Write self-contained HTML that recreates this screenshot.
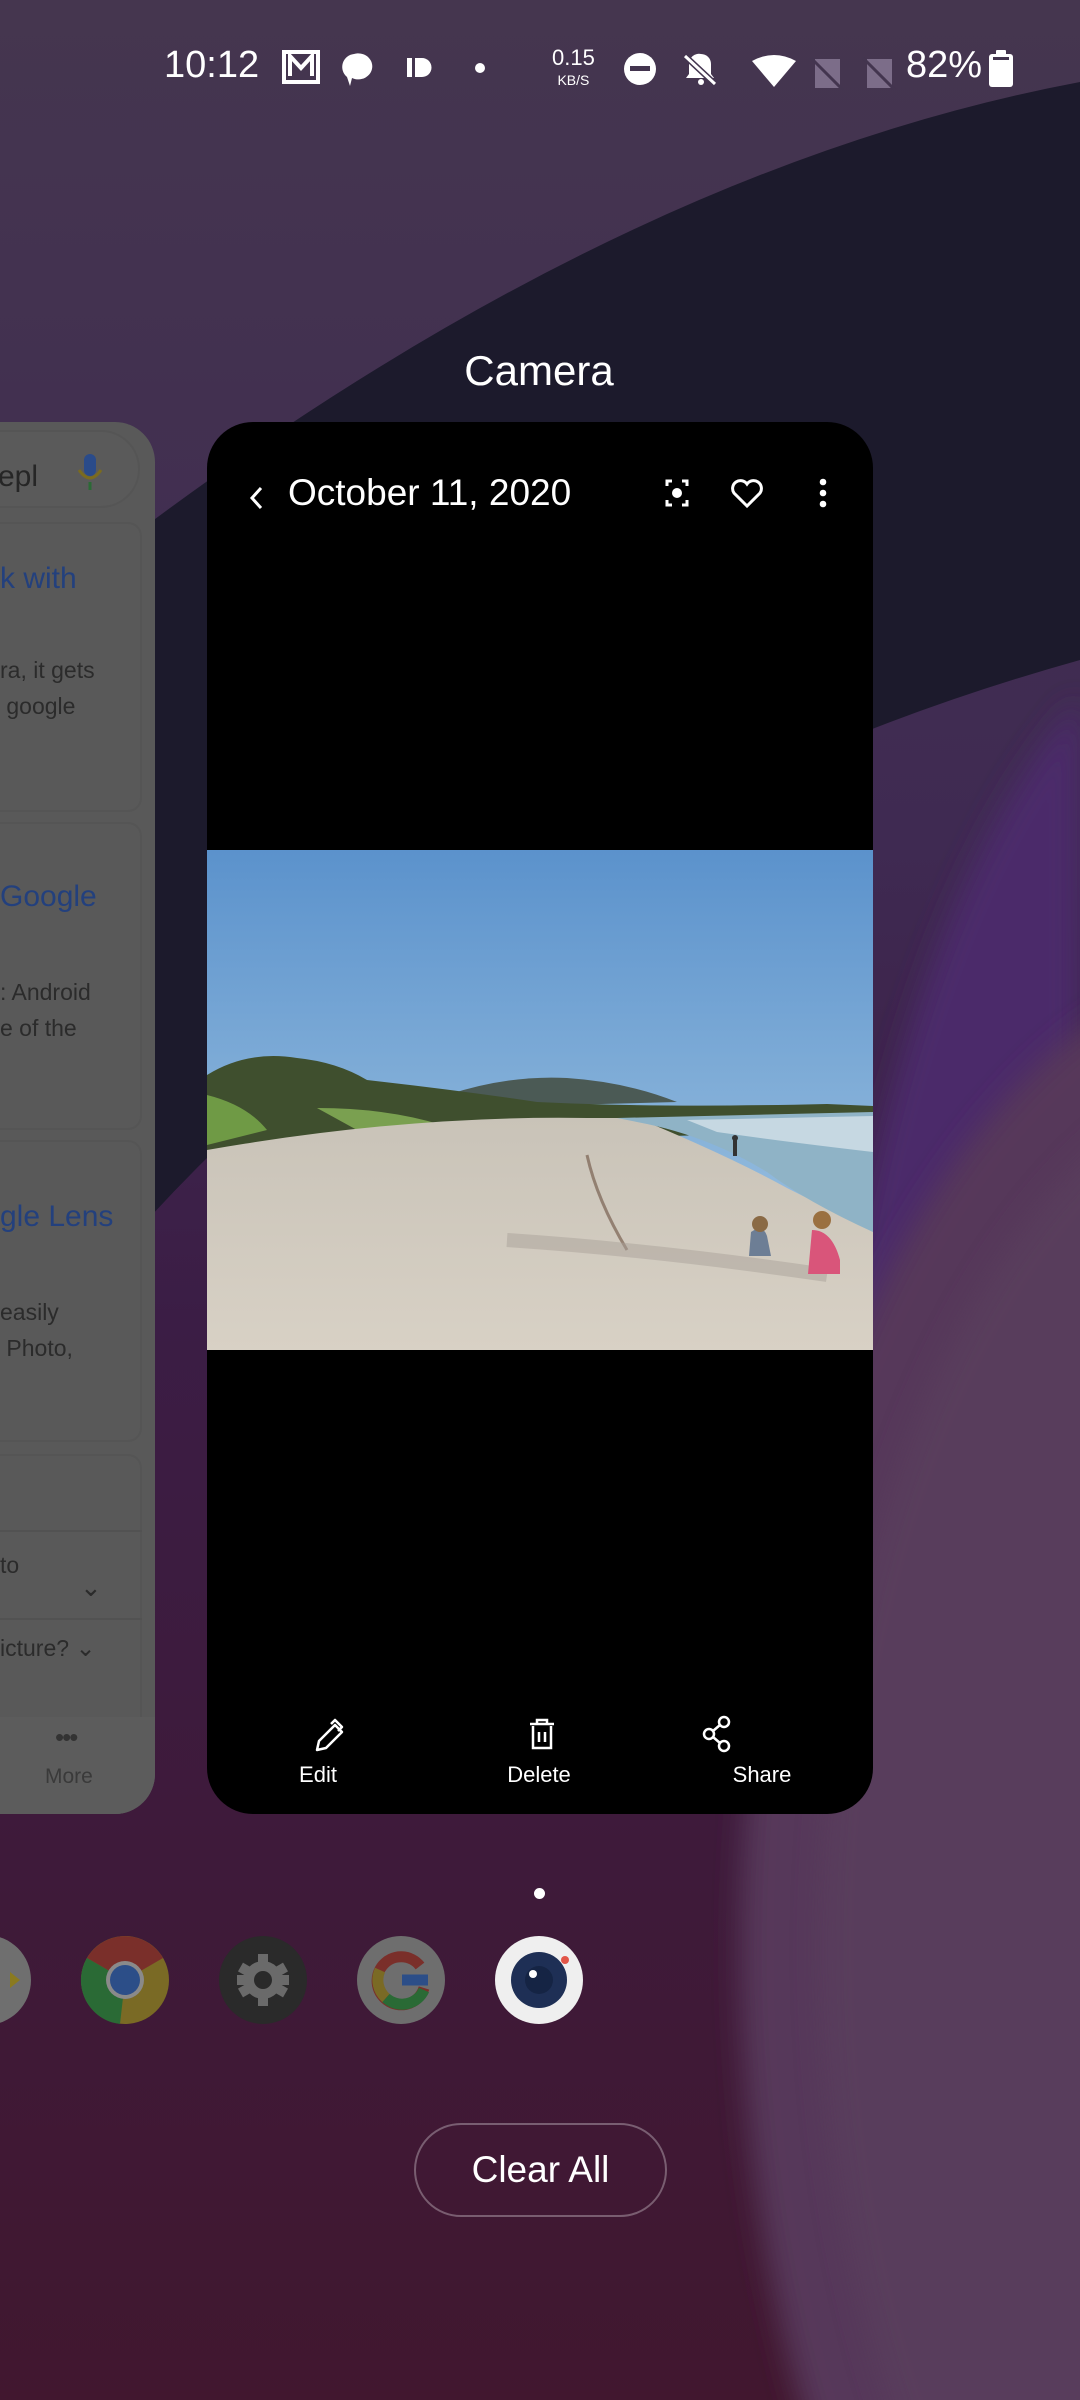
<!DOCTYPE html>
<html><head><meta charset="utf-8"><style>
*{margin:0;padding:0;box-sizing:border-box}
html,body{width:1080px;height:2400px;overflow:hidden;font-family:"Liberation Sans",sans-serif}
body{position:relative;background:#3f1d44}
.abs{position:absolute}
.st{color:#fff;font-size:38px;top:46px}
.lbl{color:#fff;font-size:22px;text-align:center;width:120px}
</style></head><body>
<svg class="abs" style="left:0;top:0" width="1080" height="2400">
<defs>
<linearGradient id="bg" x1="0" y1="0" x2="0" y2="1">
<stop offset="0" stop-color="#45364f"/><stop offset="0.35" stop-color="#3f2a52"/><stop offset="0.55" stop-color="#3b1d45"/><stop offset="1" stop-color="#41172f"/></linearGradient>
<linearGradient id="sand" x1="0" y1="0" x2="0" y2="1"><stop offset="0" stop-color="#c9c3b8"/><stop offset="1" stop-color="#d8d1c5"/></linearGradient>
<linearGradient id="sky" x1="0" y1="0" x2="0" y2="1"><stop offset="0" stop-color="#5b92cc"/><stop offset="1" stop-color="#a9cbe4"/></linearGradient>
<filter id="bl"><feGaussianBlur stdDeviation="14"/></filter>
</defs>
<rect width="1080" height="2400" fill="url(#bg)"/>
<path d="M1080 700 Q900 900 830 1400 L1080 1400Z" fill="#4b2a6a" filter="url(#bl)"/>
<ellipse cx="1300" cy="1950" rx="560" ry="1000" fill="#56395a" filter="url(#bl)"/>
<ellipse cx="1320" cy="1950" rx="500" ry="900" fill="#5a3f5d" opacity="0.7" filter="url(#bl)"/>
<path d="M1080 82 Q560 180 0 640 L0 1400 Q400 850 1080 660Z" fill="#1c1a2c"/>
</svg>

<!-- status bar -->
<div class="abs st" style="left:164px;top:44px;font-size:38px">10:12</div>
<svg class="abs" style="left:280px;top:48px" width="220" height="40">
<rect x="4" y="4" width="34" height="30" fill="none" stroke="#fff" stroke-width="4"/><path d="M10 28V8l11 12 11-12v20" stroke="#fff" stroke-width="4" fill="none"/>
<path d="M74 6a14 13 0 1 1 -2 24l-2 8-3-9a13 13 0 0 1 7-23z" fill="#fff"/>
<rect x="127" y="10" width="5" height="19" fill="#fff"/><path d="M135 10h7a9.5 9.5 0 0 1 0 19h-7z" fill="#fff"/>
<circle cx="200" cy="20" r="5" fill="#fff"/>
</svg>
<div class="abs" style="left:552px;top:48px;color:#fff;font-size:22px;line-height:20px;text-align:center">0.15<br><span style="font-size:14px">KB/S</span></div>
<svg class="abs" style="left:615px;top:48px" width="400" height="42">
<circle cx="25" cy="21" r="16" fill="#fff"/><rect x="15" y="18" width="20" height="5" fill="#43354f"/>
<path d="M86 6a10 10 0 0 1 10 10v10l3 4H71l3-4V16a10 10 0 0 1 12-10z" fill="#fff"/><path d="M70 8l30 28" stroke="#43354f" stroke-width="6"/><path d="M70 8l30 28" stroke="#fff" stroke-width="3"/><circle cx="86" cy="34" r="3" fill="#fff"/>
<path d="M137 13q22-12 44 0l-22 26z" fill="#fff"/>
<rect x="200" y="11" width="25" height="29" fill="#7c6d89"/><path d="M196 10l32 32" stroke="#43354f" stroke-width="3"/>
<rect x="252" y="11" width="25" height="29" fill="#7c6d89"/><path d="M248 10l32 32" stroke="#43354f" stroke-width="3"/>
</svg>
<div class="abs st" style="left:906px;top:44px">82%</div>
<svg class="abs" style="left:988px;top:50px" width="26" height="38"><rect x="8" y="0" width="10" height="5" rx="1" fill="#fff"/><rect x="1" y="4" width="24" height="33" rx="3" fill="#fff"/><rect x="5" y="7" width="16" height="3" fill="#43354f"/></svg>

<div class="abs" style="left:0;width:1078px;top:347px;text-align:center;color:#fff;font-size:42px">Camera</div>

<!-- left card -->
<div class="abs" style="left:-60px;top:422px;width:215px;height:1392px;background:#595959;border-radius:0 40px 40px 0;overflow:hidden">
<div class="abs" style="left:-40px;top:8px;width:240px;height:78px;border:2px solid #555;border-radius:40px;background:#5a5a5a"></div>
<div class="abs" style="left:58px;top:38px;color:#262626;font-size:30px">epl</div>
<svg class="abs" style="left:135px;top:30px" width="30" height="44"><rect x="9" y="2" width="12" height="22" rx="6" fill="#2a4b8a"/><path d="M4 18q11 16 22 0" stroke="#7a6b1f" stroke-width="3" fill="none"/><path d="M15 30v8" stroke="#2b6a35" stroke-width="3"/></svg>
<div class="abs" style="left:0;top:100px;width:202px;height:290px;border:2px solid #555;border-radius:14px"></div>
<div class="abs" style="left:60px;top:140px;color:#23407d;font-size:30px">k with</div>
<div class="abs" style="left:60px;top:230px;color:#2b2b2b;font-size:23px;line-height:36px">ra, it gets<br>&nbsp;google</div>
<div class="abs" style="left:0;top:400px;width:202px;height:308px;border:2px solid #555;border-radius:14px"></div>
<div class="abs" style="left:60px;top:458px;color:#23407d;font-size:30px">Google</div>
<div class="abs" style="left:60px;top:552px;color:#2b2b2b;font-size:23px;line-height:36px">: Android<br>e of the</div>
<div class="abs" style="left:0;top:718px;width:202px;height:302px;border:2px solid #555;border-radius:14px"></div>
<div class="abs" style="left:60px;top:778px;color:#23407d;font-size:30px">gle Lens</div>
<div class="abs" style="left:60px;top:872px;color:#2b2b2b;font-size:23px;line-height:36px">easily<br>&nbsp;Photo,</div>
<div class="abs" style="left:0;top:1032px;width:202px;height:360px;border:2px solid #555;border-radius:14px"></div>
<div class="abs" style="left:0;top:1108px;width:202px;border-top:2px solid #525252"></div>
<div class="abs" style="left:60px;top:1130px;color:#2b2b2b;font-size:23px">to</div>
<div class="abs" style="left:140px;top:1150px;color:#2b2b2b;font-size:26px">&#8964;</div>
<div class="abs" style="left:0;top:1196px;width:202px;border-top:2px solid #525252"></div>
<div class="abs" style="left:60px;top:1212px;color:#2b2b2b;font-size:23px">icture? <span style="font-size:24px">&#8964;</span></div>
<div class="abs" style="left:0;top:1295px;width:215px;height:100px;background:#5c5c5c"></div>
<div class="abs" style="left:115px;top:1300px;color:#333;font-size:26px;letter-spacing:-2px">&bull;&bull;&bull;</div>
<div class="abs" style="left:105px;top:1343px;color:#3a3a3a;font-size:21px">More</div>
</div>

<!-- camera card -->
<div class="abs" style="left:207px;top:422px;width:666px;height:1392px;background:#000;border-radius:46px;overflow:hidden">
<svg class="abs" style="left:36px;top:56px" width="30" height="40"><path d="M18 10l-9 10 9 10" stroke="#fff" stroke-width="3" fill="none"/></svg>
<div class="abs" style="left:81px;top:50px;color:#fff;font-size:37px">October 11, 2020</div>
<svg class="abs" style="left:450px;top:50px" width="200" height="44">
<path d="M10 14v-5h5M25 9h5v5M30 28v5h-5M15 33h-5v-5" stroke="#fff" stroke-width="3" fill="none"/><circle cx="20" cy="21" r="5" fill="#fff"/>
<path d="M90 34l-13-13a7.5 7.5 0 0 1 13-9a7.5 7.5 0 0 1 13 9z" stroke="#fff" stroke-width="3" fill="none"/>
<circle cx="166" cy="10" r="3.3" fill="#fff"/><circle cx="166" cy="21" r="3.3" fill="#fff"/><circle cx="166" cy="32" r="3.3" fill="#fff"/>
</svg>
<svg class="abs" style="left:0;top:428px" width="666" height="500" viewBox="0 0 666 500">
<rect width="666" height="500" fill="url(#sky)"/>
<path d="M240 245 Q300 225 360 228 Q420 232 470 252 L240 258Z" fill="#4b5a55"/>
<path d="M0 225 Q40 200 90 208 Q130 212 160 230 Q250 240 330 252 Q450 258 620 254 L666 256 L666 280 L0 300Z" fill="#3f4f2e"/>
<path d="M0 245 Q40 255 60 280 L0 295Z" fill="#6f9a45"/>
<path d="M110 258 Q180 258 235 275 L150 280Z" fill="#7aa050"/>
<path d="M0 300 Q200 265 380 268 L430 268 Q520 305 580 338 Q640 368 666 382 L666 500 L0 500Z" fill="url(#sand)"/>
<path d="M410 268 L666 262 L666 382 Q600 352 560 322 Q500 285 430 272Z" fill="#8fb3c6"/>
<path d="M480 270 L666 266 L666 302 Q580 292 510 282Z" fill="#c6d8e2"/>
<path d="M380 305 Q390 350 420 400" stroke="#6a5040" stroke-width="3" fill="none" opacity="0.6"/>
<path d="M300 390 Q450 400 620 425" stroke="#a9a29a" stroke-width="14" fill="none" opacity="0.5"/>
<path d="M544 382 q12 -8 16 4 l4 20 h-22z" fill="#6d7e95"/><circle cx="553" cy="374" r="8" fill="#8a6a45"/>
<path d="M605 380 q20 0 28 30 l0 14 h-32z" fill="#d9557a"/><circle cx="615" cy="370" r="9" fill="#9a7040"/>
<circle cx="528" cy="288" r="3" fill="#333"/><rect x="526" y="288" width="4" height="18" fill="#333"/>
</svg>
<svg class="abs" style="left:92px;top:1290px" width="500" height="50">
<path d="M18 38l2-9 16-16 7 7-16 16z M32 12l4-4 7 7-4 4" stroke="#fff" stroke-width="2.5" fill="none" stroke-linejoin="round"/>
<path d="M231 12h24M238 12V8h10v4M234 14v22h18V14M240 20v10M246 20v10" stroke="#fff" stroke-width="2.5" fill="none"/>
<circle cx="425" cy="10" r="5" stroke="#fff" stroke-width="2.5" fill="none"/><circle cx="410" cy="22" r="5" stroke="#fff" stroke-width="2.5" fill="none"/><circle cx="425" cy="34" r="5" stroke="#fff" stroke-width="2.5" fill="none"/><path d="M414 19l7-6M414 25l7 6" stroke="#fff" stroke-width="2.5"/>
</svg>
<div class="abs lbl" style="left:51px;top:1340px">Edit</div>
<div class="abs lbl" style="left:272px;top:1340px">Delete</div>
<div class="abs lbl" style="left:495px;top:1340px">Share</div>
</div>

<div class="abs" style="left:534px;top:1888px;width:11px;height:11px;border-radius:50%;background:#fff"></div>

<!-- app icons -->
<svg class="abs" style="left:0;top:1932px" width="620" height="100">
<circle cx="-14" cy="48" r="45" fill="#6f6f6f"/><path d="M10 40l10 8-10 8z" fill="#8a7a20"/>
<circle cx="125" cy="48" r="44" fill="#7a6a25"/>
<path d="M125 48 L87 26 A44 44 0 0 1 163 26Z" fill="#7a2f2a"/>
<path d="M125 48 L87 26 A44 44 0 0 0 120 92Z" fill="#2a6a35"/>
<circle cx="125" cy="48" r="19" fill="#8a8a8a"/><circle cx="125" cy="48" r="15" fill="#2c4e88"/>
<circle cx="263" cy="48" r="44" fill="#2a2a2a"/>
<g transform="translate(263,48)"><circle r="19" fill="#6a6a6a"/><g fill="#6a6a6a"><rect x="-5" y="-26" width="10" height="52"/><rect x="-26" y="-5" width="52" height="10"/><rect x="-5" y="-26" width="10" height="52" transform="rotate(60)"/><rect x="-5" y="-26" width="10" height="52" transform="rotate(-60)"/></g><circle r="9" fill="#2a2a2a"/></g>
<circle cx="401" cy="48" r="44" fill="#6e6e6e"/>
<path d="M420 34 A24 24 0 1 0 424 56" stroke="#7a2f2a" stroke-width="11" fill="none"/>
<path d="M380 38 A24 24 0 0 0 386 66" stroke="#7a6a25" stroke-width="11" fill="none"/>
<path d="M386 66 A24 24 0 0 0 424 58" stroke="#2a6a35" stroke-width="11" fill="none"/>
<path d="M402 48h26" stroke="#2c4e88" stroke-width="11"/>
<circle cx="539" cy="48" r="44" fill="#efefef"/>
<circle cx="539" cy="48" r="28" fill="#1e2f55"/><circle cx="539" cy="48" r="14" fill="#152444"/><circle cx="533" cy="42" r="4" fill="#fff"/><circle cx="565" cy="28" r="4" fill="#e25548"/>
</svg>

<div class="abs" style="left:414px;top:2123px;width:253px;height:94px;border:2px solid rgba(255,255,255,0.3);border-radius:47px;color:#fff;font-size:37px;text-align:center;line-height:90px">Clear All</div>
</body></html>
